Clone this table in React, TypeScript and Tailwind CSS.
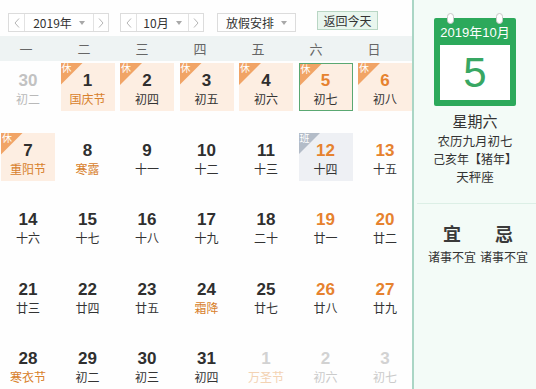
import React from "react";

type Day = {
  d: number;
  l: string;
  tag?: "休" | "班";
  dim?: boolean;
  fest?: boolean;
  sel?: boolean;
};

const days: Day[] = [
  { d: 30, l: "初二", dim: true },
  { d: 1, l: "国庆节", tag: "休", fest: true },
  { d: 2, l: "初四", tag: "休" },
  { d: 3, l: "初五", tag: "休" },
  { d: 4, l: "初六", tag: "休" },
  { d: 5, l: "初七", tag: "休", sel: true },
  { d: 6, l: "初八", tag: "休" },
  { d: 7, l: "重阳节", tag: "休", fest: true },
  { d: 8, l: "寒露", fest: true },
  { d: 9, l: "十一" },
  { d: 10, l: "十二" },
  { d: 11, l: "十三" },
  { d: 12, l: "十四", tag: "班" },
  { d: 13, l: "十五" },
  { d: 14, l: "十六" },
  { d: 15, l: "十七" },
  { d: 16, l: "十八" },
  { d: 17, l: "十九" },
  { d: 18, l: "二十" },
  { d: 19, l: "廿一" },
  { d: 20, l: "廿二" },
  { d: 21, l: "廿三" },
  { d: 22, l: "廿四" },
  { d: 23, l: "廿五" },
  { d: 24, l: "霜降", fest: true },
  { d: 25, l: "廿七" },
  { d: 26, l: "廿八" },
  { d: 27, l: "廿九" },
  { d: 28, l: "寒衣节", fest: true },
  { d: 29, l: "初二" },
  { d: 30, l: "初三" },
  { d: 31, l: "初四" },
  { d: 1, l: "万圣节", dim: true, fest: true },
  { d: 2, l: "初六", dim: true },
  { d: 3, l: "初七", dim: true },
];

const weekNames = ["一", "二", "三", "四", "五", "六", "日"];

function Chevron({ dir }: { dir: "l" | "r" }) {
  return (
    <svg width="6" height="10" viewBox="0 0 6 10">
      <polyline
        points={dir === "l" ? "5,0.5 1,5 5,9.5" : "1,0.5 5,5 1,9.5"}
        fill="none"
        stroke="#b5b5b5"
        strokeWidth="1"
      />
    </svg>
  );
}

function Caret() {
  return <span className="ml-[7px] inline-block w-0 h-0 border-l-[3.5px] border-r-[3.5px] border-t-[4px] border-l-transparent border-r-transparent border-t-[#a8a8a8]" />;
}

function Picker({ label, mid }: { label: string; mid: string }) {
  return (
    <div className="flex h-[19px] border border-[#dcdcdc] bg-white">
      <div className="w-[16px] flex items-center justify-center border-r border-[#e2e2e2]">
        <Chevron dir="l" />
      </div>
      <div className={`${mid} flex items-center justify-center text-[12px] text-[#333]`}>
        {label}
        <Caret />
      </div>
      <div className="w-[15px] flex items-center justify-center border-l border-[#e2e2e2]">
        <Chevron dir="r" />
      </div>
    </div>
  );
}

function Cell({ day, col }: { day: Day; col: number }) {
  const bg =
    day.tag === "休" ? "bg-[#fdeee2]" : day.tag === "班" ? "bg-[#eef0f4]" : "";
  let numColor = col >= 5 ? "text-[#e6822f]" : "text-[#2f2f2f]";
  if (day.dim) numColor = "text-[#d2d2d2]";
  let lunarColor = day.fest ? "text-[#d8812c]" : "text-[#333]";
  if (day.dim) lunarColor = day.fest ? "text-[#f3d3b4]" : "text-[#cbcbcb]";
  if (day.dim && day.d === 30) {
    numColor = "text-[#c2c2c2]";
    lunarColor = "text-[#b9b9b9]";
  }
  return (
    <div
      className={`relative h-[48px] flex flex-col items-center ${bg} ${
        day.sel ? "border border-[#5aa872] pt-[7px]" : "pt-[8px]"
      }`}
    >
      {day.tag && (
        <div
          className={`absolute left-0 top-0 w-[22px] h-[22px] [clip-path:polygon(0_0,100%_0,0_100%)] ${
            day.tag === "休" ? "bg-[#f1a466]" : "bg-[#b3bcc8]"
          }`}
        >
          <span className="absolute left-[1px] top-[-1px] text-[10px] leading-[12px] text-white">
            {day.tag}
          </span>
        </div>
      )}
      <div
        className={`font-['Liberation_Sans',sans-serif] font-bold text-[17px] leading-[20px] ${numColor}`}
      >
        {day.d}
      </div>
      <div className={`text-[12px] leading-[16px] ${lunarColor}`}>{day.l}</div>
    </div>
  );
}

export default function App() {
  return (
    <div className="w-[536px] h-[389px] flex overflow-hidden bg-white font-['Noto_Sans_CJK_SC','Liberation_Sans',sans-serif]">
      {/* calendar */}
      <div className="w-[412px] shrink-0 flex flex-col bg-[#fefefe]">
        <div className="h-[36px] flex items-start pt-[12px] pl-[8px]">
          <div className="mt-[1px]">
            <Picker label="2019年" mid="w-[68px]" />
          </div>
          <div className="mt-[1px] ml-[11px]">
            <Picker label="10月" mid="w-[51px]" />
          </div>
          <div className="mt-[1px] ml-[13px] w-[79px] h-[19px] border border-[#dcdcdc] flex items-center justify-center text-[12px] text-[#333]">
            放假安排
            <Caret />
          </div>
          <div className="ml-[21px] mt-[-1px] w-[61px] h-[19px] border border-[#b9d6c4] bg-[#e9f6ee] flex items-center justify-center text-[12px] text-[#333]">
            返回今天
          </div>
        </div>
        <div className="h-[26px] bg-[#eef3f3]">
          <div className="ml-[-3px] grid grid-cols-[repeat(7,58px)] h-full items-center">
            {weekNames.map((w) => (
              <div key={w} className="text-center text-[13px] text-[#666]">
                {w}
              </div>
            ))}
          </div>
        </div>
        <div className="mt-[2px] pl-[1px] grid grid-cols-[repeat(7,54px)] gap-x-[5.5px] gap-y-[21.5px]">
          {days.map((day, i) => (
            <Cell key={i} day={day} col={i % 7} />
          ))}
        </div>
      </div>

      {/* side panel */}
      <div className="flex-1 border-l-2 border-[#aad6c5] bg-[#f3fbf7] flex flex-col">
        <div className="flex flex-col items-center">
          <div className="relative mt-[18px] w-[82px] h-[88px] bg-[#2ca95b] rounded-[2px]">
            <div className="absolute left-[13px] top-[-5px] w-[7px] h-[11px] rounded-full bg-white border border-[#c8c8c8]" />
            <div className="absolute right-[13px] top-[-5px] w-[7px] h-[11px] rounded-full bg-white border border-[#c8c8c8]" />
            <div className="h-[27px] flex items-center justify-center pt-[2px] text-[13px] text-white font-['Liberation_Sans','Noto_Sans_CJK_SC',sans-serif]">
              2019年10月
            </div>
            <div className="mx-[6px] h-[55px] bg-white flex items-center justify-center font-['Liberation_Sans',sans-serif] text-[42px] leading-none text-[#38a763]">
              5
            </div>
          </div>
          <div className="mt-[6px] text-[15px] leading-[18px] text-[#333]">星期六</div>
          <div className="mt-[2px] text-[12.5px] leading-[18px] text-[#333]">农历九月初七</div>
          <div className="text-[12px] leading-[18px] text-[#333]">己亥年【猪年】</div>
          <div className="text-[12.5px] leading-[18px] text-[#333]">天秤座</div>
        </div>
        <div className="mt-[17px] ml-[3px] h-px bg-[#dcefe6]" />
        <div className="pl-[12px] flex mt-[17px]">
          <div className="w-[52px] flex flex-col items-center">
            <div className="text-[18px] leading-[24px] font-bold text-[#3a3a3a]">宜</div>
            <div className="mt-[4px] text-[12px] leading-[16px] text-[#333]">诸事不宜</div>
          </div>
          <div className="w-[52px] flex flex-col items-center">
            <div className="text-[18px] leading-[24px] font-bold text-[#3a3a3a]">忌</div>
            <div className="mt-[4px] text-[12px] leading-[16px] text-[#333]">诸事不宜</div>
          </div>
        </div>
      </div>
    </div>
  );
}
